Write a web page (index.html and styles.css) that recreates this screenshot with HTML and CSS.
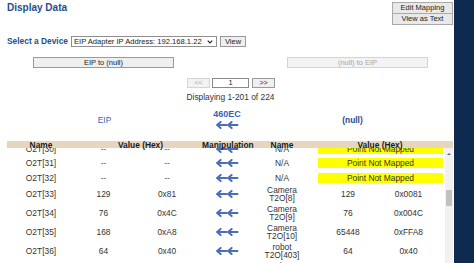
FILE: index.html
```html
<!DOCTYPE html>
<html>
<head>
<meta charset="utf-8">
<title>Display Data</title>
<link rel="stylesheet" href="styles.css">
</head>
<body>
<svg class="defs" width="0" height="0">
  <symbol id="arrows" viewBox="0 0 23 8">
    <g fill="none" stroke="#4a6db4" stroke-width="2" stroke-linecap="round" stroke-linejoin="round">
      <polyline points="4.6,1 1.2,4 4.6,7"/>
      <line x1="1.5" y1="4" x2="10.5" y2="4"/>
      <polyline points="15.6,1 12.2,4 15.6,7"/>
      <line x1="12.5" y1="4" x2="21.5" y2="4"/>
    </g>
  </symbol>
</svg>
<div class="page">
  <div class="main">
    <div class="top">
      <h1 class="title">Display Data</h1>
      <div class="btnstack">
        <div class="sbtn">Edit Mapping</div>
        <div class="sbtn second">View as Text</div>
      </div>
    </div>

    <div class="select-row">
      <span class="sel-label">Select a Device</span>
      <div class="select">
        <span class="sel-text">EIP Adapter IP Address: 192.168.1.22</span>
        <svg class="chev" width="6" height="4" viewBox="0 0 6 4"><polyline points="0.7,0.7 3,3 5.3,0.7" fill="none" stroke="#222" stroke-width="1.1"/></svg>
      </div>
      <div class="btn view">View</div>
    </div>

    <div class="convert-row">
      <div class="btn conv">EIP to (null)</div>
      <div class="btn conv disabled second-conv">(null) to EIP</div>
    </div>

    <div class="pagerbox">
      <div class="pager">
        <div class="btn pg disabled">&lt;&lt;</div>
        <div class="pginput">1</div>
        <div class="btn pg">&gt;&gt;</div>
      </div>
      <div class="displaying">Displaying 1-201 of 224</div>
    </div>

    <div class="labels">
      <div class="lbl-left">EIP</div>
      <div class="lbl-mid">
        <div class="dev">460EC</div>
        <svg class="arr" width="23" height="8"><use href="#arrows"/></svg>
      </div>
      <div class="lbl-right">(null)</div>
    </div>

    <div class="table">
      <div class="thead">
        <span class="h c1">Name</span>
        <span class="h c23">Value (Hex)</span>
        <span class="h c4">Manipulation</span>
        <span class="h c5">Name</span>
        <span class="h c68">Value (Hex)</span>
      </div>
      <div class="tbody">
        <div class="rows">
          <div class="row r1">
            <span>O2T[30]</span><span class="dim">--</span><span class="dim">--</span>
            <svg class="arr" width="23" height="8"><use href="#arrows"/></svg>
            <span>N/A</span><span class="nm">Point Not Mapped</span>
          </div>
          <div class="row r1">
            <span>O2T[31]</span><span class="dim">--</span><span class="dim">--</span>
            <svg class="arr" width="23" height="8"><use href="#arrows"/></svg>
            <span>N/A</span><span class="nm">Point Not Mapped</span>
          </div>
          <div class="row r1">
            <span>O2T[32]</span><span class="dim">--</span><span class="dim">--</span>
            <svg class="arr" width="23" height="8"><use href="#arrows"/></svg>
            <span>N/A</span><span class="nm">Point Not Mapped</span>
          </div>
          <div class="row r2">
            <span>O2T[33]</span><span>129</span><span>0x81</span>
            <svg class="arr" width="23" height="8"><use href="#arrows"/></svg>
            <span class="two">Camera<br>T2O[8]</span><span>129</span><span>0x0081</span>
          </div>
          <div class="row r2">
            <span>O2T[34]</span><span>76</span><span>0x4C</span>
            <svg class="arr" width="23" height="8"><use href="#arrows"/></svg>
            <span class="two">Camera<br>T2O[9]</span><span>76</span><span>0x004C</span>
          </div>
          <div class="row r2">
            <span>O2T[35]</span><span>168</span><span>0xA8</span>
            <svg class="arr" width="23" height="8"><use href="#arrows"/></svg>
            <span class="two">Camera<br>T2O[10]</span><span>65448</span><span>0xFFA8</span>
          </div>
          <div class="row r2">
            <span>O2T[36]</span><span>64</span><span>0x40</span>
            <svg class="arr" width="23" height="8"><use href="#arrows"/></svg>
            <span class="two">robot<br>T2O[403]</span><span>64</span><span>0x40</span>
          </div>
          <div class="row r2">
            <span>O2T[37]</span><span>0</span><span>0x00</span>
            <svg class="arr" width="23" height="8"><use href="#arrows"/></svg>
            <span class="two">robot<br>T2O[404]</span><span>0</span><span>0x00</span>
          </div>
        </div>
        <div class="scrollbar">
          <div class="sb-up"></div>
          <div class="sb-thumb"></div>
        </div>
      </div>
    </div>
  </div>
  <div class="side"></div>
</div>
</body>
</html>
```

FILE: styles.css
```css
html, body {
  margin: 0;
  padding: 0;
  background: #ffffff;
}
body {
  font-family: "Liberation Sans", Arial, sans-serif;
  font-size: 8.4px;
  color: #333333;
  width: 474px;
  height: 263px;
  overflow: hidden;
}
.defs {
  position: absolute;
  width: 0;
  height: 0;
}
.page {
  display: flex;
  height: 263px;
}
.main {
  width: 454px;
  flex: none;
}
.side {
  width: 20px;
  flex: none;
  background: #0e2b4f;
}

/* top */
.top {
  display: flex;
  justify-content: space-between;
  align-items: flex-start;
  padding: 2px 1px 0 7px;
}
.title {
  margin: 0;
  font-size: 10px;
  line-height: 12px;
  font-weight: bold;
  color: #1f4e8d;
}
.btnstack {
  display: flex;
  flex-direction: column;
  width: 61px;
}
.sbtn {
  box-sizing: border-box;
  height: 12px;
  border: 1px solid #a9a9a9;
  background: #e9e9e9;
  color: #222;
  font-size: 7.5px;
  line-height: 10px;
  text-align: center;
}
.sbtn.second {
  height: 11px;
  border-top: none;
  line-height: 10px;
}

/* select */
.select-row {
  display: flex;
  align-items: center;
  margin-top: 11px;
  padding-left: 7px;
  height: 11px;
}
.sel-label {
  font-weight: bold;
  color: #1f4e8d;
  line-height: 11px;
  white-space: nowrap;
}
.select {
  box-sizing: border-box;
  margin-left: 3px;
  width: 146px;
  height: 11px;
  border: 1px solid #8f8f8f;
  background: #fff;
  display: flex;
  align-items: center;
  justify-content: space-between;
  padding: 0 3px 0 2px;
  color: #222;
  font-size: 7.6px;
  line-height: 9px;
  white-space: nowrap;
  overflow: hidden;
}
.chev {
  display: block;
  flex: none;
}
.btn {
  box-sizing: border-box;
  border: 1px solid #999;
  background: #efefef;
  color: #222;
  font-size: 7.5px;
  text-align: center;
  white-space: nowrap;
}
.btn.view {
  margin-left: 3px;
  width: 26px;
  height: 11px;
  line-height: 9px;
}

/* convert buttons */
.convert-row {
  display: flex;
  margin-top: 10px;
  height: 11px;
  padding-left: 33px;
}
.btn.conv {
  width: 141px;
  height: 11px;
  line-height: 9px;
  background: #efefef;
  border-color: #9a9a9a;
}
.btn.conv.second-conv {
  margin-left: 113px;
}
.btn.disabled {
  color: #a8a8a8;
  border-color: #d4d4d4;
  background: #f3f3f3;
}

/* pager */
.pagerbox {
  margin-top: 10px;
  margin-left: 186px;
  width: 89px;
}
.pager {
  display: flex;
  height: 10px;
}
.btn.pg {
  width: 23px;
  height: 10px;
  line-height: 8px;
  font-size: 7px;
}
.btn.pg:first-child {
  margin-left: 1px;
}
.pginput {
  box-sizing: border-box;
  margin: 0 3px 0 2px;
  width: 37px;
  height: 10px;
  border: 1px solid #8a8a8a;
  background: #fff;
  color: #222;
  text-align: center;
  font-size: 7.5px;
  line-height: 8px;
}
.displaying {
  margin-top: 4px;
  text-align: center;
  line-height: 10px;
  color: #333;
  white-space: nowrap;
}

/* labels */
.labels {
  display: flex;
  margin-top: 7px;
  height: 20px;
}
.lbl-left {
  margin-left: 7px;
  width: 195px;
  text-align: center;
  padding-top: 6px;
  line-height: 10px;
  color: #3565b8;
}
.lbl-mid {
  width: 50px;
  display: flex;
  flex-direction: column;
  align-items: center;
}
.dev {
  font-size: 9px;
  font-weight: bold;
  line-height: 10px;
  color: #3565b8;
}
.lbl-mid .arr {
  margin-top: 2px;
  display: block;
}
.lbl-right {
  width: 201px;
  text-align: center;
  padding-top: 6px;
  line-height: 10px;
  font-weight: bold;
  color: #2b4a88;
}

/* table */
.table {
  margin-top: 12px;
  margin-left: 7px;
  width: 446px;
}
.thead {
  position: relative;
  z-index: 2;
  display: grid;
  grid-template-columns: 68px 57px 70px 50px 60px 72px 49px 12px 8px;
  height: 7px;
  background: #e6d6c0;
  font-weight: bold;
  color: #1a1a1a;
  line-height: 8px;
  white-space: nowrap;
}
.h {
  text-align: center;
}
.c1 { grid-column: 1; }
.c23 { grid-column: 2 / 4; padding-left: 4px; }
.c4 { grid-column: 4; }
.c5 { grid-column: 5; }
.c68 { grid-column: 6 / 10; padding-right: 5px; }

.tbody {
  display: flex;
  height: 115px;
  overflow: hidden;
}
.rows {
  width: 438px;
  margin-top: -6.75px;
}
.row {
  display: grid;
  grid-template-columns: 68px 57px 70px 50px 60px 72px 49px 12px;
  align-items: center;
  justify-items: center;
  line-height: 10px;
  white-space: nowrap;
}
.r1 { height: 14.5px; }
.r2 { height: 19px; }
.row .arr {
  display: block;
}
.dim {
  color: #555;
}
.two {
  text-align: center;
  line-height: 8px;
}
.nm {
  grid-column: 6 / 9;
  justify-self: stretch;
  margin: 0 2px 0 6px;
  height: 10px;
  line-height: 10px;
  background: #ffff00;
  text-align: center;
  color: #333;
}
.scrollbar {
  width: 8px;
  flex: none;
  background: #f1f1f1;
  display: flex;
  flex-direction: column;
  align-items: center;
}
.sb-up {
  margin-top: 5px;
  width: 0;
  height: 0;
  border-left: 2px solid transparent;
  border-right: 2px solid transparent;
  border-bottom: 2.5px solid #666;
}
.sb-thumb {
  margin-top: 34.5px;
  width: 6px;
  height: 16px;
  background: #c1c1c1;
}
```
